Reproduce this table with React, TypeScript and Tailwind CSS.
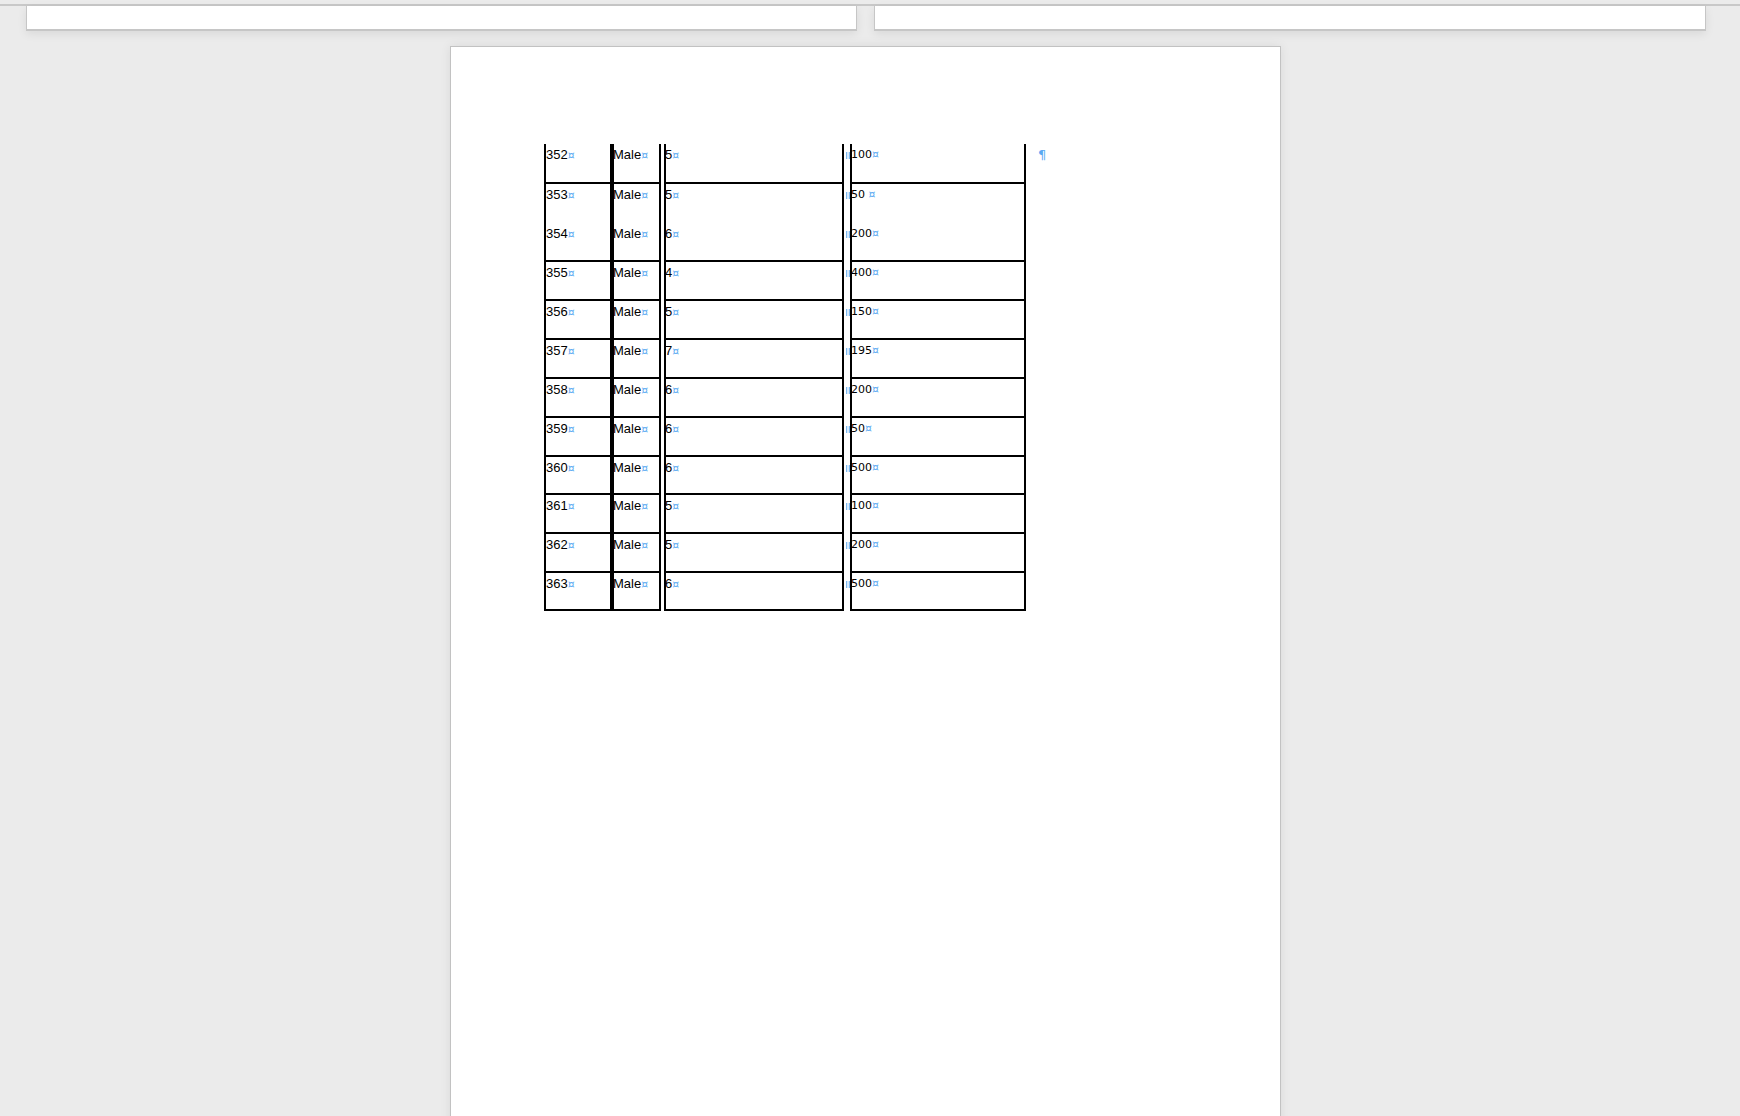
import React from "react";

interface Line {
  id: string;
  sex: string;
  count: string;
  amount: string;
}

interface Row {
  lines: Line[];
  h: string;
}

const rows: Row[] = [
  { lines: [{ id: "352", sex: "Male", count: "5", amount: "100" }], h: "h-[40px]" },
  {
    lines: [
      { id: "353", sex: "Male", count: "5", amount: "50 " },
      { id: "354", sex: "Male", count: "6", amount: "200" },
    ],
    h: "h-[78px]",
  },
  { lines: [{ id: "355", sex: "Male", count: "4", amount: "400" }], h: "h-[39px]" },
  { lines: [{ id: "356", sex: "Male", count: "5", amount: "150" }], h: "h-[39px]" },
  { lines: [{ id: "357", sex: "Male", count: "7", amount: "195" }], h: "h-[39px]" },
  { lines: [{ id: "358", sex: "Male", count: "6", amount: "200" }], h: "h-[39px]" },
  { lines: [{ id: "359", sex: "Male", count: "6", amount: "50" }], h: "h-[39px]" },
  { lines: [{ id: "360", sex: "Male", count: "6", amount: "500" }], h: "h-[38px]" },
  { lines: [{ id: "361", sex: "Male", count: "5", amount: "100" }], h: "h-[39px]" },
  { lines: [{ id: "362", sex: "Male", count: "5", amount: "200" }], h: "h-[39px]" },
  { lines: [{ id: "363", sex: "Male", count: "6", amount: "500" }], h: "h-[38px]" },
];

const sans = "font-['Liberation_Sans',Arial,sans-serif] text-[13px] leading-4 text-black";
const dejavu = "font-['DejaVu_Sans',sans-serif] text-[11px] leading-4 text-black";

// end-of-cell marker as Word shows it with formatting marks on
const Mark: React.FC = () => (
  <span className="font-['DejaVu_Sans',sans-serif] text-[11px] text-[#5aa9f2]">¤</span>
);

const Cell: React.FC<{ lines: string[]; font: string; shift?: string }> = ({ lines, font, shift = "" }) => (
  <>
    {lines.map((t, i) => (
      <div key={i} className={`h-[39px] pt-[3px] whitespace-pre ${font} ${shift}`}>
        {t}
        <Mark />
      </div>
    ))}
  </>
);

const App: React.FC = () => {
  return (
    <div className="relative h-[1116px] w-full overflow-hidden bg-[#ebebeb]">
      {/* top strip with the two header boxes */}
      <div className="mt-[4px] border-t-2 border-[#c8c8c8]">
        <div className="flex gap-[17px] pl-[26px]">
          <div className="h-[25px] w-[831px] border-x border-b-2 border-[#c6c6c6] bg-white shadow-[0_3px_10px_rgba(0,0,0,0.08)]" />
          <div className="h-[25px] w-[832px] border-x border-b-2 border-[#c6c6c6] bg-white shadow-[0_3px_10px_rgba(0,0,0,0.08)]" />
        </div>
      </div>

      {/* page */}
      <div className="ml-[450px] mt-[15px] h-[1100px] w-[831px] border border-[#c2c2c2] bg-white pl-[93px] pt-[97px] shadow-[0_0_10px_rgba(0,0,0,0.08)]">
        <div className="flex items-start">
          {/* id + sex */}
          <div className="w-[117px] border-x-2 border-black">
            {rows.map((r, i) => (
              <div key={i} className={`flex border-b-2 border-black ${r.h}`}>
                <div className="w-[64px]">
                  <Cell lines={r.lines.map((l) => l.id)} font={sans} />
                </div>
                <div className="w-[49px] border-l-4 border-black">
                  <Cell lines={r.lines.map((l) => l.sex)} font={sans} shift="-ml-[1px]" />
                </div>
              </div>
            ))}
          </div>

          {/* count */}
          <div className="ml-[3px] w-[180px] border-x-2 border-black">
            {rows.map((r, i) => (
              <div key={i} className={`border-b-2 border-black ${r.h}`}>
                <Cell lines={r.lines.map((l) => l.count)} font={sans} shift="-ml-[1px]" />
              </div>
            ))}
          </div>

          {/* markers between the tables */}
          <div className="w-[6px]">
            {rows.map((r, i) => (
              <div key={i} className={r.h}>
                {r.lines.map((_, j) => (
                  <div key={j} className="h-[39px] pl-[2px] pt-[8px]">
                    <span className="block h-[7px] w-[4px] border-x border-[#7db9f0] bg-[#d6e9fb]" />
                  </div>
                ))}
              </div>
            ))}
          </div>

          {/* amount */}
          <div className="w-[176px] border-x-2 border-black">
            {rows.map((r, i) => (
              <div key={i} className={`border-b-2 border-black ${r.h}`}>
                <Cell lines={r.lines.map((l) => l.amount)} font={dejavu} shift="-ml-[1px]" />
              </div>
            ))}
          </div>

          <div className="ml-[12px] pt-[3px] font-['DejaVu_Sans',sans-serif] text-[13px] leading-4 text-[#5aa9f2]">¶</div>
        </div>
      </div>
    </div>
  );
};

export default App;
